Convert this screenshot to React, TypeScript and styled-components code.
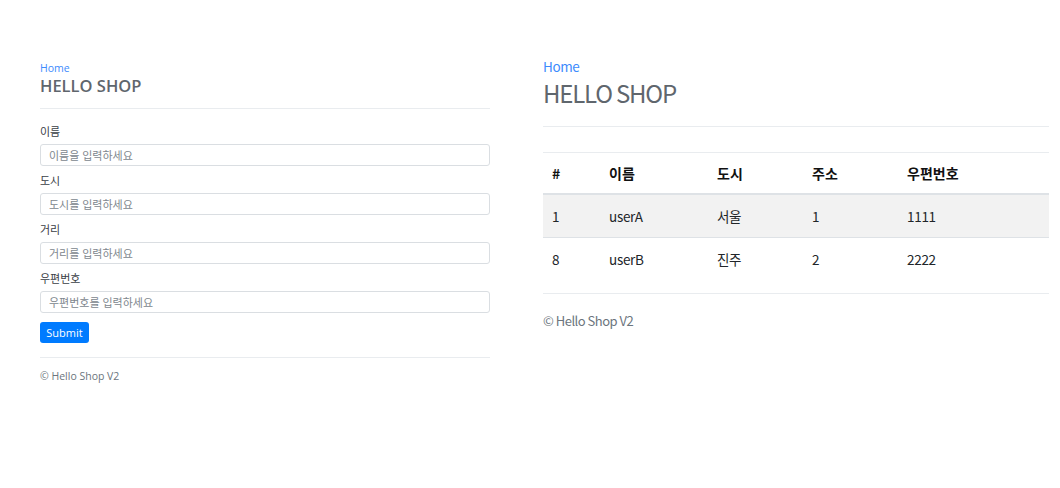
import styled, { createGlobalStyle } from "styled-components";

const GlobalStyle = createGlobalStyle`
  body {
    margin: 0;
    background: #ffffff;
    font-family: "Open Sans", "Noto Sans CJK KR", sans-serif;
  }
`;

const USERS = [
  { id: 1, name: "userA", city: "서울", street: "1", zipcode: "1111" },
  { id: 8, name: "userB", city: "진주", street: "2", zipcode: "2222" },
];

const FIELDS = [
  { label: "이름", placeholder: "이름을 입력하세요" },
  { label: "도시", placeholder: "도시를 입력하세요" },
  { label: "거리", placeholder: "거리를 입력하세요" },
  { label: "우편번호", placeholder: "우편번호를 입력하세요" },
];

const App = () => {
  return (
    <>
      <GlobalStyle />
      <Page>
        <FormPanel>
          <HomeLink href="#">Home</HomeLink>
          <Title>HELLO SHOP</Title>
          <Divider />
          <Form onSubmit={(e) => e.preventDefault()}>
            {FIELDS.map((field) => (
              <Field key={field.label}>
                <Label>{field.label}</Label>
                <Input placeholder={field.placeholder} />
              </Field>
            ))}
            <SubmitButton type="submit">Submit</SubmitButton>
          </Form>
          <FooterDivider />
          <Footer>© Hello Shop V2</Footer>
        </FormPanel>

        <ListPanel>
          <HomeLink href="#" $large>
            Home
          </HomeLink>
          <Title $large>HELLO SHOP</Title>
          <Divider $large />
          <Table>
            <colgroup>
              <col style={{ width: 57 }} />
              <col style={{ width: 108 }} />
              <col style={{ width: 95 }} />
              <col style={{ width: 95 }} />
              <col />
            </colgroup>
            <thead>
              <tr>
                <Th>#</Th>
                <Th>이름</Th>
                <Th>도시</Th>
                <Th>주소</Th>
                <Th>우편번호</Th>
              </tr>
            </thead>
            <tbody>
              {USERS.map((user, index) => (
                <Row key={user.id} $striped={index % 2 === 0}>
                  <Td>{user.id}</Td>
                  <Td>{user.name}</Td>
                  <Td>{user.city}</Td>
                  <Td>{user.street}</Td>
                  <Td>{user.zipcode}</Td>
                </Row>
              ))}
            </tbody>
          </Table>
          <Divider $large $footer />
          <Footer $large>© Hello Shop V2</Footer>
        </ListPanel>
      </Page>
    </>
  );
};

export default App;

const Page = styled.div`
  display: flex;
  align-items: flex-start;
  gap: 53px;
  padding-left: 40px;
`;

const FormPanel = styled.div`
  display: flex;
  flex-direction: column;
  width: 450px;
  padding-top: 62px;
`;

const ListPanel = styled.div`
  display: flex;
  flex-direction: column;
  width: 506px;
  padding-top: 57px;
  font-family: "Noto Sans CJK KR", sans-serif;
`;

const HomeLink = styled.a<{ $large?: boolean }>`
  color: #3d8bfd;
  text-decoration: none;
  font-size: ${(p) => (p.$large ? "13.5px" : "10.5px")};
  line-height: ${(p) => (p.$large ? "18px" : "12px")};
  letter-spacing: ${(p) => (p.$large ? "-0.4px" : "0")};
`;

const Title = styled.h1<{ $large?: boolean }>`
  margin: ${(p) => (p.$large ? "4px 0 0" : "2px 0 0")};
  color: #5f666d;
  font-size: ${(p) => (p.$large ? "24px" : "16.5px")};
  line-height: ${(p) => (p.$large ? "28px" : "20px")};
  font-weight: ${(p) => (p.$large ? 400 : 600)};
  letter-spacing: ${(p) => (p.$large ? "-1.2px" : "0")};
`;

const Divider = styled.hr<{ $large?: boolean; $footer?: boolean }>`
  width: 100%;
  border: 0;
  border-top: 1px solid #e9ecef;
  margin: ${(p) =>
    p.$footer ? "13px 0 18px" : p.$large ? "19px 0 25px" : "12px 0 16px"};
`;

const Form = styled.form`
  display: flex;
  flex-direction: column;
  align-items: flex-start;
`;

const Field = styled.div`
  display: flex;
  flex-direction: column;
  gap: 5px;
  width: 100%;
  margin-bottom: 8px;
`;

const Label = styled.label`
  font-size: 11px;
  line-height: 14px;
  color: #3a4046;
`;

const Input = styled.input`
  box-sizing: border-box;
  width: 100%;
  height: 22px;
  padding: 0 8px;
  border: 1px solid #dadee2;
  border-radius: 3px;
  font-family: inherit;
  font-size: 11px;
  color: #495057;

  &::placeholder {
    color: #80878e;
  }
`;

const SubmitButton = styled.button`
  margin-top: 1px;
  height: 21px;
  width: 49px;
  padding: 0;
  border: 0;
  border-radius: 3px;
  background: #007bff;
  color: #ffffff;
  font-family: inherit;
  font-size: 11px;
`;

const FooterDivider = styled.hr`
  width: 100%;
  border: 0;
  border-top: 1px solid #e9ecef;
  margin: 14px 0 11px;
`;

const Footer = styled.footer<{ $large?: boolean }>`
  color: #6c757d;
  font-size: ${(p) => (p.$large ? "13px" : "10.5px")};
  line-height: ${(p) => (p.$large ? "18px" : "14px")};
  letter-spacing: ${(p) => (p.$large ? "-0.5px" : "0")};
`;

const Table = styled.table`
  width: 100%;
  table-layout: fixed;
  border-collapse: collapse;
  font-size: 13.5px;
  color: #212529;
`;

const Th = styled.th`
  height: 40px;
  padding: 0 9px;
  text-align: left;
  font-size: 14px;
  font-weight: 700;
  color: #111111;
  border-top: 1px solid #e9ecef;
  border-bottom: 2px solid #dee2e6;
`;

const Row = styled.tr<{ $striped: boolean }>`
  background: ${(p) => (p.$striped ? "#f2f2f2" : "transparent")};
`;

const Td = styled.td`
  height: 42px;
  padding: 0 9px;
  letter-spacing: -0.3px;
  border-top: 1px solid #dee2e6;

  tr:first-child > & {
    border-top: 0;
  }
`;
